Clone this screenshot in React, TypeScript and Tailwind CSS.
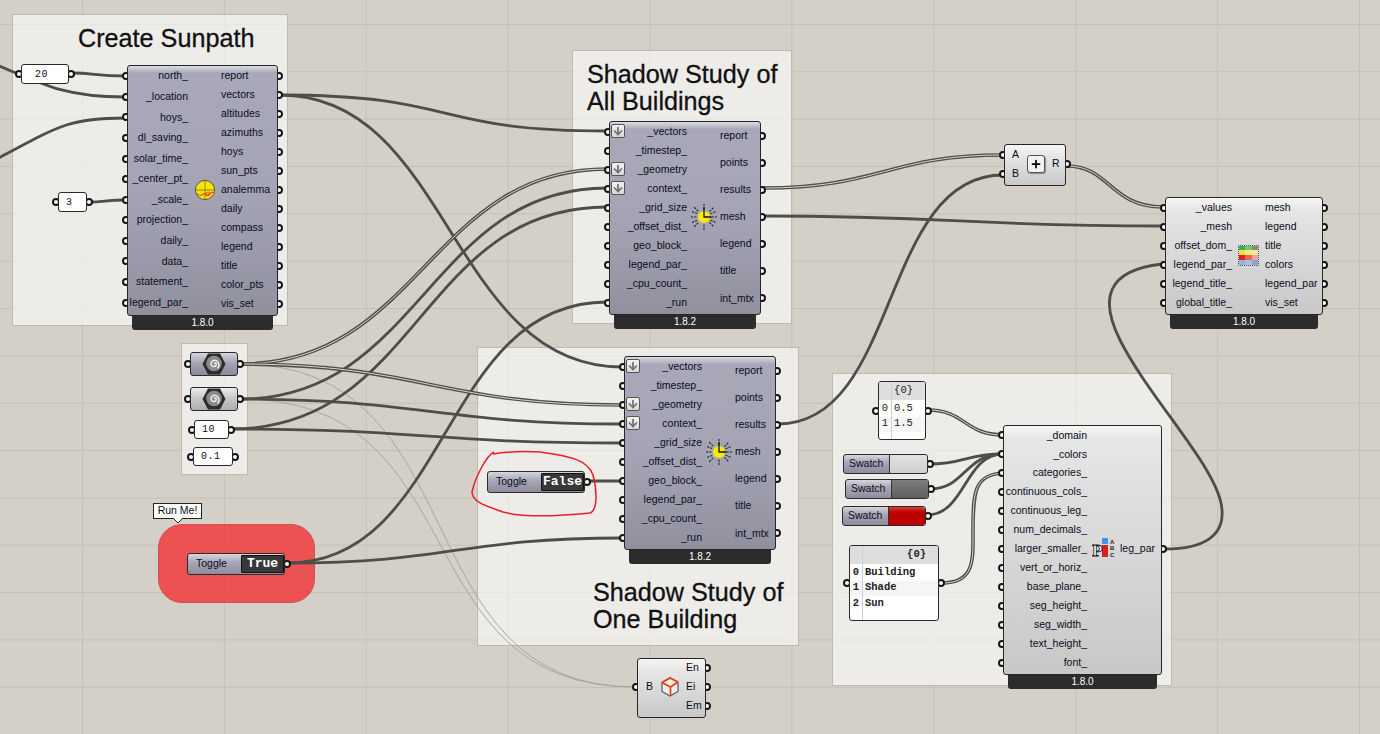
import { ArrowDown, Plus } from 'lucide-react';
import type { ReactNode } from 'react';

// under: sits behind the node body, only the outer half shows
const Port = ({ side, under = false }: { side: 'l' | 'r'; under?: boolean }) => (
  <span
    className={
      'absolute top-1/2 -mt-[4px] h-[8px] w-[8px] rounded-full border-2 border-[#161616] bg-white ' +
      (side === 'l' ? '-left-[6px] ' : '-right-[6px] ') +
      (under ? '-z-10' : '')
    }
  />
);

type Input = string | { label: string; flat: boolean };

type NodeProps = {
  x: number;
  y: number;
  w: number;
  h: number;
  left: number;
  inputs: Input[];
  outputs: string[];
  icon: ReactNode;
  version?: string;
  light?: boolean;
};

const Row = ({ children, side }: { children: ReactNode; side: 'l' | 'r' }) => (
  <div className={'relative flex flex-1 items-center whitespace-nowrap ' + (side === 'l' ? 'justify-end' : '')}>
    {children}
  </div>
);

// one grasshopper component, body and version strip
const GhNode = ({ x, y, w, h, left, inputs, outputs, icon, version, light }: NodeProps) => (
  <div className="absolute isolate flex flex-col" style={{ left: x, top: y, width: w }}>
    <div
      className={
        'flex rounded-[3px] border border-[#262626] pb-[2px] text-[10.500px] text-[#0c0c20] ' +
        (light
          ? 'bg-[linear-gradient(#f6f6f6,#e6e6e6_12px,#c8c8c8)]'
          : 'bg-[linear-gradient(#dcdce2,#a8a8b8_7px,#a4a4b4_50%,#90909f)]')
      }
      style={{ height: h }}
    >
      <div className="flex flex-col" style={{ width: left }}>
        {inputs.map((inp) => {
          const label = typeof inp === 'string' ? inp : inp.label;
          return (
            <Row side="l" key={label}>
              {label}
              <Port side="l" under />
              {typeof inp !== 'string' && (
                <span className="absolute left-[1px] top-[2px] flex h-[14px] w-[14px] items-center justify-center rounded-[2px] border border-[#555] bg-[linear-gradient(#f2f2f2,#d8d8d8)] text-[#707070]">
                  <ArrowDown size={12} strokeWidth={3.500} />
                </span>
              )}
            </Row>
          );
        })}
      </div>
      <div className="flex w-[33px] shrink-0 items-center justify-center">{icon}</div>
      <div className="flex flex-1 flex-col">
        {outputs.map((o) => (
          <Row side="r" key={o}>
            {o}
            <Port side="r" under />
          </Row>
        ))}
      </div>
    </div>
    {version && (
      <div className="mx-[5px] flex h-[14px] items-center justify-center rounded-b-[3px] bg-[#2c2c2c] text-[10px] leading-none text-white">
        {version}
      </div>
    )}
  </div>
);

const SunpathIcon = () => (
  <svg width="22" height="22" viewBox="0 0 22 22">
    <circle cx="11" cy="11" r="9.600" fill="#f6e600" stroke="#555" strokeWidth="1" />
    <path d="M11 1V21M1 11H21" stroke="#77701c" strokeWidth="0.800" />
    <path d="M2.500 14c3 4 5 2 7 1s2 2 4 1 3-2 6-3" fill="none" stroke="#e0442a" strokeWidth="1.100" />
    <circle cx="14" cy="15" r="2" fill="none" stroke="#e0442a" strokeWidth="0.900" />
  </svg>
);

const ClockSunIcon = () => (
  <svg width="26" height="26" viewBox="0 0 24 24">
    <g stroke="#222" strokeWidth="1" strokeDasharray="2 1">
      <path d="M12 0V5M12 19V24M0 12H5M19 12H24M3 3L7 7M17 17L21 21M3 21L7 17M17 7L21 3M1 7L6 9M18 15L23 17M1 17L6 15M18 9L23 7" />
    </g>
    <circle cx="12" cy="12" r="5.600" fill="#f7ea00" />
    <path d="M12 3V12H19" fill="none" stroke="#111" strokeWidth="1.200" />
  </svg>
);

const RECOLOR = ['#2db36a', '#7cc36a', '#8a8a80', '#f3e23e', '#f5ee7a', '#efe8a0', '#e02020', '#ee6060', '#f0a0a0', '#8fb4e0', '#a8c0e0', '#8aa5d0'];

const RecolorIcon = () => (
  <div className="grid h-[21px] w-[21px] grid-cols-3 grid-rows-4 border border-dotted border-[#555]">
    {RECOLOR.map((c) => (
      <span key={c} style={{ backgroundColor: c }} />
    ))}
  </div>
);

const LegendIcon = () => (
  <svg width="24" height="22" viewBox="0 0 24 22" className="-mt-[1px]">
    <rect x="10" y="0" width="6" height="6" fill="#3b96e8" />
    <rect x="10" y="7" width="6" height="12" fill="#d8201c" />
    <text x="0" y="18" fontFamily="Liberation Serif" fontWeight="700" fontSize="17" fill="#fff" stroke="#111" strokeWidth="0.800">
      P
    </text>
    <g fontFamily="Liberation Sans" fontWeight="700" fontSize="6" fill="#222">
      <text x="18" y="6">A</text>
      <text x="18" y="12">B</text>
      <text x="18" y="19">C</text>
    </g>
  </svg>
);

const CubeIcon = () => (
  <svg width="18" height="20" viewBox="0 0 18 20">
    <path d="M1 5.500L9 1L17 5L17 14.500L9 19L1 14.500Z" fill="#f0eeea" stroke="#555" strokeWidth="1.200" />
    <path d="M1 5.500L9 1L17 5M1 5.500L9.500 10L17 5M9.500 10V19" fill="none" stroke="#e8400f" strokeWidth="1.700" />
  </svg>
);

const HexIcon = () => (
  <svg width="24" height="22" viewBox="0 0 24 22">
    <path d="M6 0.500H18L23.500 11L18 21.500H6L0.500 11Z" fill="#2c2c2c" />
    <circle cx="12" cy="10.500" r="7.800" fill="#8a8a8a" />
    <path d="M12 10.500c1-1.500 3 0 2 1.800s-4.500 1.500-5-1c-.5-3 3-5 5.500-3.500s3.500 5.500 1 7.500" fill="none" stroke="#eee" strokeWidth="1.500" />
  </svg>
);

const Group = ({ x, y, w, h, children, className = '' }: { x: number; y: number; w: number; h: number; children?: ReactNode; className?: string }) => (
  <div
    className={'absolute border border-[#bdbab2] bg-white/60 text-[25.200px] leading-[27px] text-[#111] [-webkit-text-stroke:0.3px_#111] ' + className}
    style={{ left: x, top: y, width: w, height: h }}
  >
    {children}
  </div>
);

// value box with ports: number sliders and geometry params
const Box = ({ x, y, w, h, className = '', ports = 'lr', children }: { x: number; y: number; w: number; h: number; className?: string; ports?: string; children: ReactNode }) => (
  <div className="absolute" style={{ left: x, top: y, width: w, height: h }}>
    {ports.includes('l') && <Port side="l" />}
    {ports.includes('r') && <Port side="r" />}
    <div className={'relative flex h-full items-center rounded-[3px] border border-[#2a2a2a] ' + className}>{children}</div>
  </div>
);

const Toggle = ({ x, y, value }: { x: number; y: number; value: string }) => (
  <Box x={x} y={y} w={98} h={22} ports="r" className="bg-[linear-gradient(#d6d6de,#a8a8b8_40%,#8c8c9c)] pl-[8px] text-[10.500px] text-[#0c0c20]">
    <span className="w-[45px]">Toggle</span>
    <span className="flex h-[18px] w-[43px] items-center justify-center rounded-[1px] border border-[#111] bg-[#383838] font-['Liberation_Mono'] text-[13px] font-bold text-white">
      {value}
    </span>
  </Box>
);

const Swatch = ({ x, y, w, color }: { x: number; y: number; w: number; color: string }) => (
  <Box x={x} y={y} w={w} h={20} ports="r" className="bg-[linear-gradient(#d6d6de,#a8a8b8_40%,#8c8c9c)] text-[10.500px] text-[#0c0c20]">
    <span className="w-[45px] shrink-0 pl-[5px]">Swatch</span>
    <span className={'h-full flex-1 rounded-r-[3px] border-l border-[#333] ' + color} />
  </Box>
);

const Panel = ({ x, y, w, h, rows, bold = false }: { x: number; y: number; w: number; h: number; rows: string[]; bold?: boolean }) => {
  const font = "font-['Liberation_Mono'] text-[10.500px] text-[#222] " + (bold ? 'font-bold' : '');
  return (
    <Box x={x} y={y} w={w} h={h} className="flex-col items-stretch overflow-hidden bg-white">
      <div className={'flex h-[18px] shrink-0 items-center justify-end bg-[#dedede] pr-[12px] ' + font}>{'{0}'}</div>
      <div className="flex flex-1 flex-col pt-[1px]">
        {rows.map((r, i) => (
          <div key={r} className={'flex h-[15.500px] items-center ' + font + (i % 2 ? ' bg-[#f5f5f5]' : '')}>
            <span className="w-[12px] text-center">{i}</span>
            <span className="pl-[3px]">{r}</span>
          </div>
        ))}
      </div>
      <span className="absolute bottom-0 left-[12px] top-0 w-px bg-[#cfcfcf]" />
    </Box>
  );
};

const SINGLE = [
  'M-5 64C50 88 70 97 125 97',
  'M71 73C95 73 95 76 125 76',
  'M-5 160C60 125 70 118 125 118',
  'M89 202C105 202 105 200 125 200',
  'M280 95C460 95 430 131 607 131',
  'M280 95C450 95 450 367 622 367',
  'M240 399C420 399 430 188 607 188',
  'M240 399C420 399 440 424 622 424',
  'M231 429C420 429 420 207 607 207',
  'M231 429C420 429 430 443 622 443',
  'M287 563C450 563 440 302 607 302',
  'M287 563C450 563 460 538 622 538',
  'M587 481L622 481',
  'M778 424C900 424 880 175 1003 175',
  'M763 216C950 216 970 226 1163 226',
  'M929 464C965 464 965 454 1003 454',
  'M930 489C965 489 965 454 1003 454',
  'M927 515C965 515 965 454 1003 454',
  'M1165 549C1205 549 1224 535 1222 510C1220 470 1150 400 1120 340C1100 300 1105 270 1163 264',
];

const DOUBLE = [
  'M240 364C420 364 430 169 607 169',
  'M240 364C420 364 440 405 622 405',
  'M763 188C880 188 890 155 1003 155',
  'M1067 166C1110 166 1110 207 1163 207',
  'M928 410C965 410 965 435 1003 435',
  'M942 583C975 583 973 560 973 530C973 490 975 475 1003 473',
];

const FAINT = ['M240 364C480 364 400 687 635 687', 'M240 399C480 399 400 687 635 687'];

const Wires = () => (
  <svg width="1380" height="734" viewBox="0 0 1380 734" className="absolute left-0 top-0" fill="none">
    {FAINT.map((d) => (
      <path key={d} d={d} stroke="#a9a69f" strokeWidth="1" />
    ))}
    {SINGLE.map((d) => (
      <path key={d} d={d} stroke="#4e4d49" strokeWidth="2.800" />
    ))}
    {DOUBLE.map((d) => (
      <g key={d}>
        <path d={d} stroke="#4e4d49" strokeWidth="3.600" />
        <path d={d} stroke="#d8d6d0" strokeWidth="1" />
      </g>
    ))}
    <path
      d="M494 452C486 456 475 478 472 492C472 503 490 507 503 512C525 518 560 516 590 513C598 510 597 490 593 475C588 460 570 456 540 452C520 451 505 452 493 454"
      stroke="#e8202a"
      strokeWidth="1.500"
    />
  </svg>
);

const flat = (label: string) => ({ label, flat: true });

const SHADOW_IN: Input[] = [flat('_vectors'), '_timestep_', flat('_geometry'), flat('context_'), '_grid_size', '_offset_dist_', 'geo_block_', 'legend_par_', '_cpu_count_', '_run'];
const SHADOW_OUT = ['report', 'points', 'results', 'mesh', 'legend', 'title', 'int_mtx'];

const NUM = "bg-white font-['Liberation_Mono'] text-[10px] tracking-[0.500px] text-[#111]";

export default function App() {
  return (
    <div className="relative isolate h-[734px] w-[1380px] overflow-hidden bg-[#d4d0c8] bg-[linear-gradient(#c4c0b8_1px,transparent_1px),linear-gradient(90deg,#c4c0b8_1px,transparent_1px)] bg-[size:141.900px_47.350px] bg-[position:82px_24px] font-['Liberation_Sans',sans-serif]">
      <Group x={12} y={14} w={276} h={312} className="pl-[65px] pt-[10px]">Create Sunpath</Group>
      <Group x={572} y={50} w={220} h={274} className="pl-[14px] pt-[10px]">Shadow Study of<br />All Buildings</Group>
      <Group x={477} y={347} w={322} h={299} className="flex items-end pb-[12px] pl-[115px]"><span>Shadow Study of<br />One Building</span></Group>
      <Group x={832} y={373} w={340} h={313} />
      <Group x={181} y={343} w={67} h={132} />
      <div className="absolute left-[158px] top-[524px] h-[79px] w-[157px] rounded-[24px] border border-[#d05050] bg-[#f03c3c]/85" />

      <Wires />

      <Box x={21} y={64} w={48} h={20} className={'pl-[13px] ' + NUM}>20</Box>
      <Box x={58} y={192} w={29} h={20} className={'pl-[7px] ' + NUM}>3</Box>
      <Box x={190} y={352} w={48} h={24} className="justify-center bg-[linear-gradient(#d6d6de,#a4a4b4_45%,#8a8a9a)]"><HexIcon /></Box>
      <Box x={190} y={387} w={48} h={24} className="justify-center bg-[linear-gradient(#ececec,#c8c8c8_45%,#aeaeae)]"><HexIcon /></Box>
      <Box x={194} y={420} w={35} h={19} className={'pl-[7px] ' + NUM}>10</Box>
      <Box x={193} y={447} w={40} h={19} className={'pl-[7px] ' + NUM}>0.1</Box>

      <GhNode
        x={127}
        y={65}
        w={151}
        h={251}
        left={60}
        version="1.8.0"
        icon={<SunpathIcon />}
        inputs={['north_', '_location', 'hoys_', 'dl_saving_', 'solar_time_', '_center_pt_', '_scale_', 'projection_', 'daily_', 'data_', 'statement_', 'legend_par_']}
        outputs={['report', 'vectors', 'altitudes', 'azimuths', 'hoys', 'sun_pts', 'analemma', 'daily', 'compass', 'legend', 'title', 'color_pts', 'vis_set']}
      />
      <GhNode x={609} y={121} w={152} h={194} left={77} version="1.8.2" icon={<ClockSunIcon />} inputs={SHADOW_IN} outputs={SHADOW_OUT} />
      <GhNode x={624} y={356} w={152} h={194} left={77} version="1.8.2" icon={<ClockSunIcon />} inputs={SHADOW_IN} outputs={SHADOW_OUT} />
      <GhNode
        x={1165}
        y={197}
        w={158}
        h={118}
        left={66}
        version="1.8.0"
        light
        icon={<RecolorIcon />}
        inputs={['_values', '_mesh', 'offset_dom_', 'legend_par_', 'legend_title_', 'global_title_']}
        outputs={['mesh', 'legend', 'title', 'colors', 'legend_par', 'vis_set']}
      />
      <GhNode
        x={1003}
        y={425}
        w={159}
        h={250}
        left={83}
        version="1.8.0"
        light
        icon={<LegendIcon />}
        inputs={['_domain', '_colors', 'categories_', 'continuous_cols_', 'continuous_leg_', 'num_decimals_', 'larger_smaller_', 'vert_or_horiz_', 'base_plane_', 'seg_height_', 'seg_width_', 'text_height_', 'font_']}
        outputs={['leg_par']}
      />
      <GhNode
        x={1004}
        y={144}
        w={62}
        h={42}
        left={14}
        light
        icon={
          <span className="flex h-[18px] w-[18px] items-center justify-center rounded-[3px] border border-[#555] bg-[#f2f2f2] text-black shadow-[1px_1px_1px_#888]">
            <Plus size={12} strokeWidth={3.500} />
          </span>
        }
        inputs={['A', 'B']}
        outputs={['R']}
      />
      <GhNode x={637} y={658} w={69} h={60} left={15} light icon={<CubeIcon />} inputs={['B']} outputs={['En', 'Ei', 'Em']} />

      <Toggle x={187} y={553} value="True" />
      <Toggle x={487} y={471} value="False" />

      <Panel x={878} y={381} w={48} h={59} rows={['0.5', '1.5']} />
      <Panel x={849} y={545} w={90} h={76} rows={['Building', 'Shade', 'Sun']} bold />
      <Swatch x={843} y={454} w={85} color="bg-[linear-gradient(#e2e2e2,#cfcfcf)]" />
      <Swatch x={845} y={479} w={84} color="bg-[linear-gradient(#7c7c7c,#5e5e5e)]" />
      <Swatch x={842} y={506} w={84} color="bg-[linear-gradient(#d84040,#bb0000_30%,#c00000)]" />

      {/* callout over the red group */}
      <div className="absolute left-[153px] top-[503px] flex h-[16px] w-[49px] items-center justify-center border border-[#222] bg-white text-[10.500px] text-[#0c0c20]">
        Run Me!
        <svg width="10" height="6" viewBox="0 0 10 6" className="absolute -bottom-[6px] left-[19px]">
          <path d="M0 0L5 5L10 0" fill="#fff" stroke="#222" />
        </svg>
      </div>
    </div>
  );
}
